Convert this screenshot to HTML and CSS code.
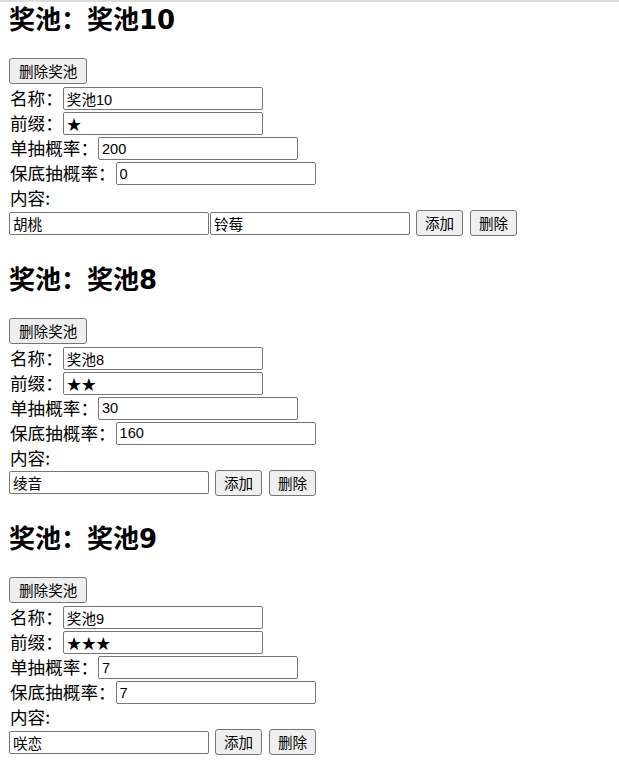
FILE: index.html
```html
<!DOCTYPE html>
<html lang="zh-CN">
<head>
<meta charset="utf-8">
<title>奖池</title>
<link rel="stylesheet" href="styles.css">
</head>
<body>
<div class="topbar"></div>
<main class="pools">
  <section class="pool">
    <h2 class="pool-title">奖池：奖池10</h2>
    <button class="btn btn-remove-pool">删除奖池</button>
    <div class="row"><span class="label">名称：</span><input class="field" value="奖池10"></div>
    <div class="row"><span class="label">前缀：</span><input class="field" value="★"></div>
    <div class="row"><span class="label">单抽概率：</span><input class="field" value="200"></div>
    <div class="row"><span class="label">保底抽概率：</span><input class="field" value="0"></div>
    <div class="row"><span class="label">内容:</span></div>
    <div class="content-row">
      <div class="items"><input class="field" value="胡桃"><input class="field" value="铃莓"></div>
      <button class="btn btn-small">添加</button>
      <button class="btn btn-small">删除</button>
    </div>
  </section>
  <section class="pool">
    <h2 class="pool-title">奖池：奖池8</h2>
    <button class="btn btn-remove-pool">删除奖池</button>
    <div class="row"><span class="label">名称：</span><input class="field" value="奖池8"></div>
    <div class="row"><span class="label">前缀：</span><input class="field" value="★★"></div>
    <div class="row"><span class="label">单抽概率：</span><input class="field" value="30"></div>
    <div class="row"><span class="label">保底抽概率：</span><input class="field" value="160"></div>
    <div class="row"><span class="label">内容:</span></div>
    <div class="content-row">
      <div class="items"><input class="field" value="绫音"></div>
      <button class="btn btn-small">添加</button>
      <button class="btn btn-small">删除</button>
    </div>
  </section>
  <section class="pool">
    <h2 class="pool-title">奖池：奖池9</h2>
    <button class="btn btn-remove-pool">删除奖池</button>
    <div class="row"><span class="label">名称：</span><input class="field" value="奖池9"></div>
    <div class="row"><span class="label">前缀：</span><input class="field" value="★★★"></div>
    <div class="row"><span class="label">单抽概率：</span><input class="field" value="7"></div>
    <div class="row"><span class="label">保底抽概率：</span><input class="field" value="7"></div>
    <div class="row"><span class="label">内容:</span></div>
    <div class="content-row">
      <div class="items"><input class="field" value="咲恋"></div>
      <button class="btn btn-small">添加</button>
      <button class="btn btn-small">删除</button>
    </div>
  </section>
</main>
</body>
</html>
```
FILE: styles.css
```css
html, body {
  margin: 0;
  padding: 0;
  background: #ffffff;
  color: #000000;
  font-family: "Noto Sans CJK SC", "Liberation Sans", sans-serif;
}

.topbar {
  height: 2px;
  background: #dcdce0;
}

.pools {
  padding-left: 9px;
  display: flex;
  flex-direction: column;
}

.pool {
  display: flex;
  flex-direction: column;
  align-items: flex-start;
  height: 259.5px;
}

.pool-title {
  margin: 0 0 20px 0;
  height: 36px;
  font-family: "DejaVu Sans", "Noto Sans CJK SC", sans-serif;
  font-size: 26px;
  line-height: 36px;
  font-weight: 700;
  padding-left: 0;
}

.btn {
  height: 26px;
  padding: 0 8px;
  margin: 0;
  background: #efefef;
  border: 1px solid #767676;
  border-radius: 3px;
  font-family: "Noto Sans CJK SC", "Liberation Sans", sans-serif;
  font-size: 14.6px;
  line-height: 24px;
  color: #000;
}

.btn-remove-pool {
  padding: 0 9px;
  margin-bottom: 1px;
}

.row {
  height: 25px;
  display: flex;
  align-items: flex-end;
}

.label {
  font-size: 17.6px;
  line-height: 25px;
  padding-left: 1px;
  white-space: nowrap;
}

.field {
  box-sizing: border-box;
  width: 200px;
  height: 23px;
  margin: 0;
  padding: 0 3px;
  border: 1px solid #767676;
  border-radius: 2px;
  background: #fff;
  font-family: "Liberation Sans", "Noto Sans CJK SC", sans-serif;
  font-size: 14.6px;
  color: #000;
}

.content-row {
  height: 26px;
  display: flex;
  align-items: center;
}

.items {
  display: flex;
  gap: 1px;
}

.btn-small {
  margin-left: 6px;
  width: 47px;
  padding: 0;
}

.btn-small + .btn-small {
  margin-left: 7px;
}
```
